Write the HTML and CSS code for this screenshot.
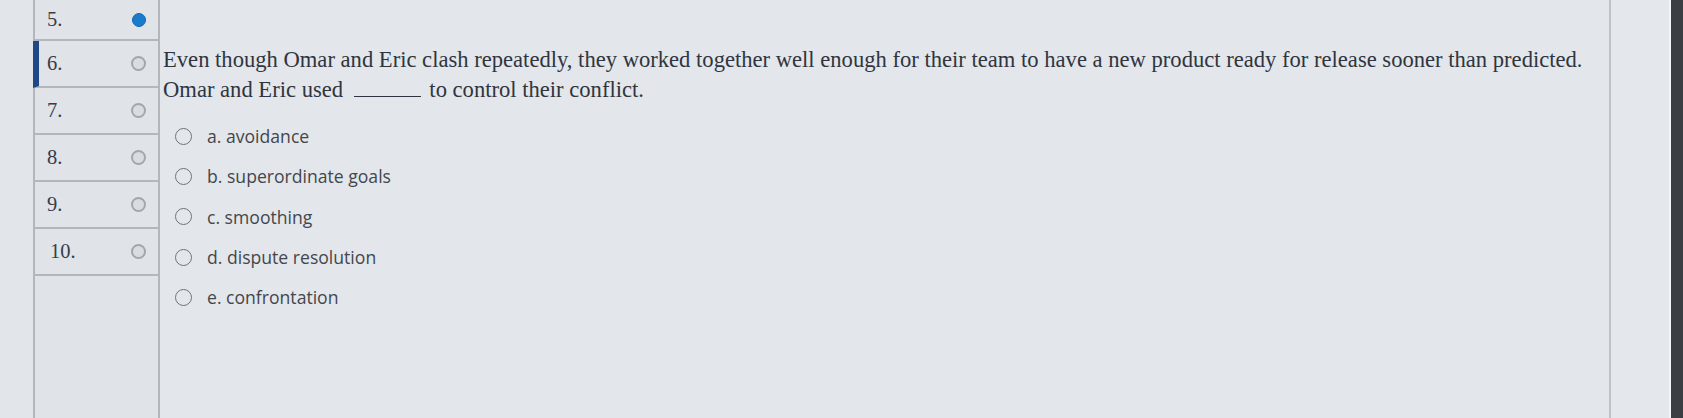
FILE: index.html
```html
<!DOCTYPE html>
<html>
<head>
<meta charset="utf-8">
<link rel="stylesheet" href="styles.css">
</head>
<body>
<div class="screen">
  <div class="gutter"></div>
  <nav class="sidebar">
    <div class="row row-first"><span class="num">5.</span><span class="dot filled"></span></div>
    <div class="row active"><span class="num">6.</span><span class="dot"></span></div>
    <div class="row"><span class="num">7.</span><span class="dot"></span></div>
    <div class="row"><span class="num">8.</span><span class="dot"></span></div>
    <div class="row"><span class="num">9.</span><span class="dot"></span></div>
    <div class="row"><span class="num ten">10.</span><span class="dot"></span></div>
    <div class="filler"></div>
  </nav>
  <main class="content">
    <p class="question">Even though Omar and Eric clash repeatedly, they worked together well enough for their team to have a new product ready for release sooner than predicted.<br>Omar and Eric used <span class="blank"></span> to control their conflict.</p>
    <ul class="options">
      <li><span class="radio"></span>a. avoidance</li>
      <li><span class="radio"></span>b. superordinate goals</li>
      <li><span class="radio"></span>c. smoothing</li>
      <li><span class="radio"></span>d. dispute resolution</li>
      <li><span class="radio"></span>e. confrontation</li>
    </ul>
  </main>
  <div class="side-pane"></div>
  <div class="edge"></div>
</div>
</body>
</html>
```
FILE: styles.css
```css
* {
  box-sizing: border-box;
}
html, body {
  margin: 0;
  padding: 0;
  background: #e2e5e9;
}
.screen {
  display: flex;
  height: 418px;
  width: 1683px;
  overflow: hidden;
  background: #e2e5e9;
}
.gutter {
  width: 33px;
  flex: none;
}
.sidebar {
  width: 127px;
  flex: none;
  display: flex;
  flex-direction: column;
  border-right: 2px solid #b3b7bd;
}
.row {
  height: 47px;
  flex: none;
  display: flex;
  align-items: center;
  justify-content: space-between;
  border-left: 2px solid #b3b7bd;
  border-bottom: 2px solid #b3b7bd;
  padding: 0 12px 0 12px;
  background: #e0e3e7;
}
.row-first {
  height: 41px;
}
.row.active {
  border-left: 6px solid #1d4a86;
  padding-left: 8px;
}
.num {
  font-family: "Liberation Serif", "DejaVu Serif", serif;
  font-size: 20.5px;
  color: #363d4b;
}
.num.ten {
  padding-left: 3px;
}
.dot {
  width: 15px;
  height: 15px;
  border-radius: 50%;
  border: 2px solid #a3a7ad;
  background: #d9dce0;
}
.dot.filled {
  width: 14px;
  height: 14px;
  border: 1px solid #1468b0;
  background: #1a7acc;
}
.filler {
  flex: 1;
  border-left: 2px solid #b3b7bd;
  background: #e0e3e7;
}
.content {
  flex: none;
  width: 1451px;
  padding-left: 3px;
  border-right: 2px solid #bfc3c8;
  background: #e3e6ea;
}
.question {
  margin: 45px 0 0 0;
  font-family: "Liberation Serif", "DejaVu Serif", serif;
  font-size: 22.6px;
  line-height: 30px;
  color: #2f3540;
  white-space: nowrap;
}
.blank {
  display: inline-block;
  width: 67px;
  margin: 0 3px 0 5px;
  border-bottom: 1.5px solid #2f3540;
}
.options {
  list-style: none;
  margin: 11px 0 0 0;
  padding: 0 0 0 12px;
}
.options li {
  display: flex;
  align-items: center;
  height: 40.3px;
  font-family: "Open Sans", "Noto Sans", sans-serif;
  font-size: 17.6px;
  color: #43464c;
}
.radio {
  width: 17px;
  height: 17px;
  border-radius: 50%;
  border: 1.8px solid #6f7379;
  margin-right: 15px;
  flex: none;
}
.side-pane {
  flex: 1;
  background: #e4e7eb;
}
.edge {
  width: 14px;
  flex: none;
  background: #3b3f43;
  border-left: 2px solid #f2f4f6;
}
```
